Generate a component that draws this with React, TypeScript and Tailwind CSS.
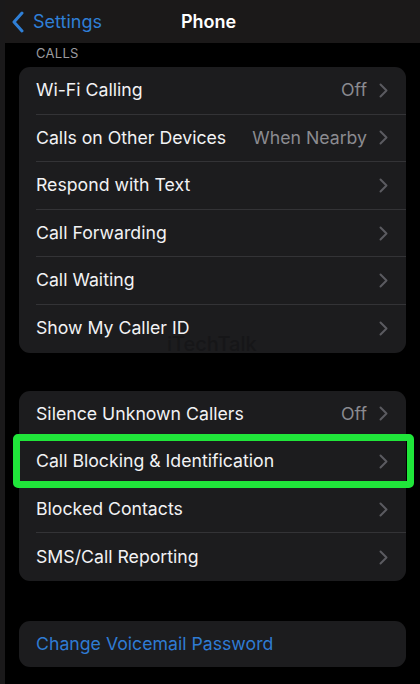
import React from 'react';

type Row = {
  label: string;
  value?: string;
  highlight?: boolean;
};

const callsRows: Row[] = [
  { label: 'Wi-Fi Calling', value: 'Off' },
  { label: 'Calls on Other Devices', value: 'When Nearby' },
  { label: 'Respond with Text' },
  { label: 'Call Forwarding' },
  { label: 'Call Waiting' },
  { label: 'Show My Caller ID' },
];

const blockingRows: Row[] = [
  { label: 'Silence Unknown Callers', value: 'Off' },
  { label: 'Call Blocking & Identification', highlight: true },
  { label: 'Blocked Contacts' },
  { label: 'SMS/Call Reporting' },
];

function Chevron() {
  return (
    <svg width="9" height="15" viewBox="0 0 9 15" fill="none" className="shrink-0">
      <path d="M1.5 1.5 L7.5 7.5 L1.5 13.5" stroke="#5b5b60" strokeWidth="2" strokeLinecap="round" strokeLinejoin="round" />
    </svg>
  );
}

function SettingsRow({ row, last }: { row: Row; last: boolean }) {
  return (
    <div className="relative h-[47.6px] pl-[17px] flex items-center">
      {/* Outline drawn around the highlighted row */}
      {row.highlight && (
        <div className="absolute -left-[6px] -right-[8px] -top-[4px] -bottom-[2px] border-[7px] border-[#20e63a] rounded-[5px] z-10" />
      )}
      <div className={`flex-1 h-full flex items-center pr-[18px] ${last ? '' : 'border-b border-[#333336]'}`}>
        <span className="flex-1 text-[17.7px] text-[#f2f2f4]">{row.label}</span>
        {row.value && <span className="text-[17.7px] text-[#8b8b90] mr-[12px]">{row.value}</span>}
        <Chevron />
      </div>
    </div>
  );
}

function Group({ rows }: { rows: Row[] }) {
  return (
    <div className="ml-[14px] mr-[14px] bg-[#1c1c1e] rounded-[11px]">
      {rows.map((row, i) => (
        <SettingsRow key={row.label} row={row} last={i === rows.length - 1} />
      ))}
    </div>
  );
}

export default function App() {
  return (
    <div
      className="relative w-[420px] h-[684px] bg-black overflow-hidden border-l-[5px] border-[#1a191a]"
      style={{ fontFamily: 'Inter, "Liberation Sans", sans-serif' }}
    >
      {/* Navigation bar */}
      <div className="h-[43px] bg-[#1b1919] flex items-center relative">
        <div className="flex items-center pl-[6px]">
          <svg width="14" height="22" viewBox="0 0 14 22" fill="none">
            <path d="M11 2 L3 11 L11 20" stroke="#2f7fd6" strokeWidth="3" strokeLinecap="round" strokeLinejoin="round" />
          </svg>
          <span className="ml-[8px] text-[18px] text-[#2f7fd6]">Settings</span>
        </div>
        <span className="absolute left-0 right-0 text-center text-[18px] font-semibold text-white pr-[8px]">Phone</span>
      </div>

      <div className="pl-[31px] pt-[1px] h-[24px] text-[13px] text-[#9a9a9e] tracking-[0.3px]">CALLS</div>

      <Group rows={callsRows} />

      <div className="h-[38px]" />
      <Group rows={blockingRows} />

      <div className="h-[40px]" />
      <div className="ml-[14px] mr-[14px] h-[46px] bg-[#1c1c1e] rounded-[11px] pl-[17px] flex items-center">
        <span className="text-[17.7px] text-[#2f7bd3]">Change Voicemail Password</span>
      </div>

      {/* Watermark */}
      <div className="absolute left-[162px] top-[329px] text-[20px] text-[#161618] font-medium pointer-events-none">
        iTechTalk
      </div>
    </div>
  );
}
